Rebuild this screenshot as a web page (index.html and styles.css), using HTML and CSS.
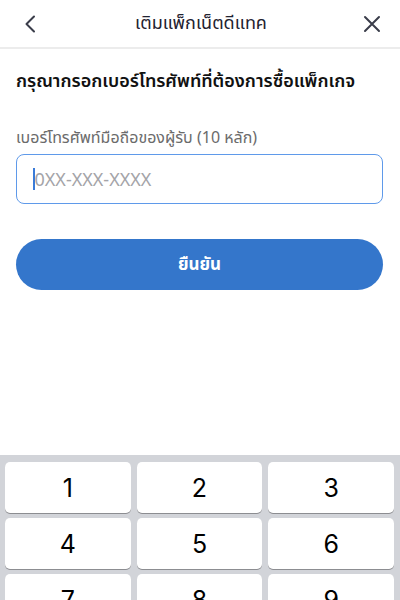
FILE: index.html
```html
<!DOCTYPE html>
<html lang="th">
<head>
    <meta charset="UTF-8">
    <meta name="viewport" content="width=device-width, initial-scale=1.0">
    <title>เติมแพ็กเน็ตดีแทค</title>
    <link rel="stylesheet" href="styles.css">
</head>
<body>

    <div class="header">
        <button class="icon-btn" aria-label="Back">
            <svg width="12" height="18" viewBox="0 0 12 18"><path d="M10 1.5 L2.5 9 L10 16.5" fill="none" stroke="#3a3d4a" stroke-width="2" stroke-linecap="round" stroke-linejoin="round"/></svg>
        </button>
        <h1>เติมแพ็กเน็ตดีแทค</h1>
        <button class="icon-btn" aria-label="Close">
            <svg width="18" height="18" viewBox="0 0 18 18"><path d="M2 2 L16 16 M16 2 L2 16" fill="none" stroke="#3a3d4a" stroke-width="2" stroke-linecap="round"/></svg>
        </button>
    </div>

    <div class="content">
        <h2>กรุณากรอกเบอร์โทรศัพท์ที่ต้องการซื้อแพ็กเกจ</h2>
        <label class="field-label" for="phone">เบอร์โทรศัพท์มือถือของผู้รับ (10 หลัก)</label>
        <div class="input-box">
            <span class="caret"></span>
            <span class="placeholder">0XX-XXX-XXXX</span>
        </div>
        <button class="submit-btn">ยืนยัน</button>
    </div>

    <div class="keypad">
        <div class="key">1</div>
        <div class="key">2</div>
        <div class="key">3</div>
        <div class="key">4</div>
        <div class="key">5</div>
        <div class="key">6</div>
        <div class="key">7</div>
        <div class="key">8</div>
        <div class="key">9</div>
    </div>

</body>
</html>
```

FILE: styles.css
```css
body {
    font-family: "Noto Sans", "Noto Sans Thai", sans-serif;
    background-color: #fff;
    margin: 0;
    padding: 0;
    width: 400px;
    height: 600px;
    overflow: hidden;
    display: flex;
    flex-direction: column;
}
.header {
    display: flex;
    align-items: center;
    justify-content: space-between;
    height: 47px;
    padding: 0 16px 0 18px;
    border-bottom: 2px solid #ececec;
}
.header h1 {
    margin: 0;
    font-size: 18px;
    font-weight: 400;
    color: #1f2230;
}
.icon-btn {
    background: none;
    border: none;
    padding: 0;
    width: 24px;
    height: 24px;
    display: flex;
    align-items: center;
    justify-content: center;
}
.content {
    flex: 1;
    padding: 0 17px 0 16px;
    display: flex;
    flex-direction: column;
}
.content h2 {
    margin: 18px 0 0;
    font-size: 18px;
    font-weight: 600;
    color: #111;
    line-height: 26px;
}
.field-label {
    margin-top: 33px;
    font-size: 16px;
    color: #6b6b6b;
    line-height: 22px;
}
.input-box {
    margin-top: 6px;
    height: 48px;
    border: 1px solid #5f9aea;
    border-radius: 8px;
    display: flex;
    align-items: center;
    padding-left: 16px;
}
.caret {
    width: 1.5px;
    height: 22px;
    background-color: #3a7bd8;
}
.placeholder {
    font-size: 18px;
    color: #a4a4a8;
}
.submit-btn {
    margin-top: 35px;
    height: 51px;
    border: none;
    border-radius: 26px;
    background-color: #3476cb;
    color: #fff;
    font-family: inherit;
    font-size: 17px;
    font-weight: 700;
}
.keypad {
    background-color: #d2d4d9;
    display: grid;
    grid-template-columns: repeat(3, 1fr);
    gap: 5px 6px;
    padding: 7px 6px 0 5px;
    height: 138px;
    margin-top: auto;
}
.key {
    background-color: #fff;
    border-radius: 5px;
    height: 51px;
    box-shadow: 0 1px 0 #8c8d91;
    display: flex;
    align-items: center;
    justify-content: center;
    font-family: Inter, sans-serif;
    font-size: 25px;
    color: #000;
}
```
